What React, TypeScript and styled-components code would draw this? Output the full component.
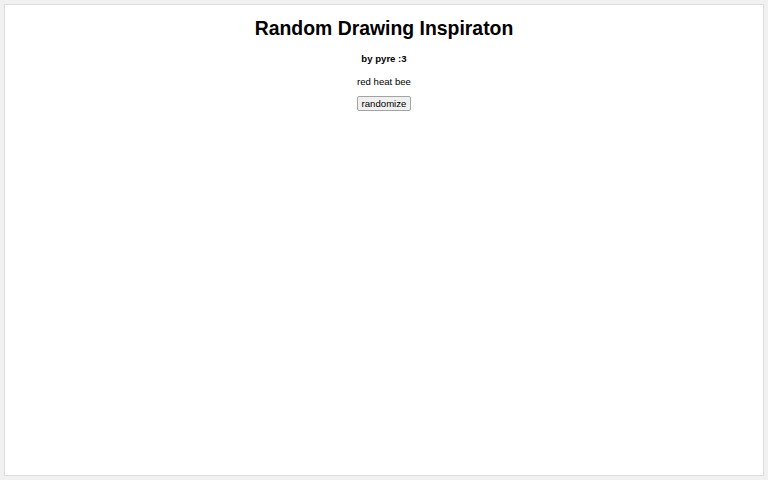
import React from "react";
import styled, { createGlobalStyle } from "styled-components";

const Global = createGlobalStyle`
  html, body { margin: 0; padding: 0; background: #f1f1f1; }
  body { font-family: "Liberation Sans", Arial, sans-serif; }
`;

const Frame = styled.div`
  box-sizing: border-box;
  width: 768px;
  height: 480px;
  padding: 4px;
`;

const Panel = styled.main`
  box-sizing: border-box;
  height: 100%;
  background: #ffffff;
  border: 1px solid #dcdcdc;
  display: flex;
  flex-direction: column;
  align-items: center;
  padding-top: 12px;
  color: #000;
`;

const Title = styled.h1`
  margin: 0;
  font-size: 19.4px;
  font-weight: bold;
  line-height: 23px;
`;

const Byline = styled.h4`
  margin: 13px 0 0;
  font-size: 9.6px;
  font-weight: bold;
  line-height: 12px;
`;

const Result = styled.p`
  margin: 11px 0 0;
  font-size: 9.6px;
  line-height: 12px;
`;

const Button = styled.button`
  box-sizing: border-box;
  height: 15px;
  margin-top: 8px;
  font-family: "Liberation Sans", Arial, sans-serif;
  font-size: 9.6px;
  line-height: 12px;
  padding: 0 4px;
  background: #f0f0f0;
  border: 1px solid #a3a3a3;
  border-radius: 2px;
  color: #000;
`;

const words = ["red", "heat", "bee"];

export default function App() {
  const [text, setText] = React.useState(words.join(" "));
  return (
    <>
      <Global />
      <Frame>
        <Panel>
          <Title>Random Drawing Inspiraton</Title>
          <Byline>by pyre :3</Byline>
          <Result>{text}</Result>
          <Button onClick={() => setText(text)}>randomize</Button>
        </Panel>
      </Frame>
    </>
  );
}
